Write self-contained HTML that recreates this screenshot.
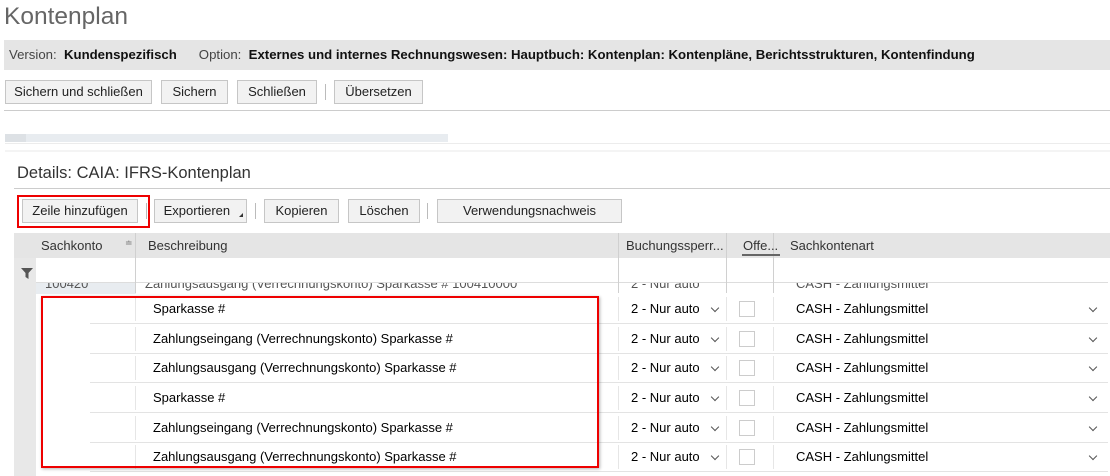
<!DOCTYPE html>
<html><head><meta charset="utf-8"><style>
*{margin:0;padding:0;box-sizing:border-box}
body{width:1110px;height:476px;background:#fff;font-family:"Liberation Sans",Arial,sans-serif;position:relative;overflow:hidden;color:#000}
.a{position:absolute}
.btn{position:absolute;height:24px;background:#f2f2f2;border:1px solid #c6c6c6;font-size:13px;line-height:22px;text-align:center;color:#222}
.sep{position:absolute;width:1px;height:16px;background:#bbb}
.row{position:absolute;left:36px;width:1072px;height:30px;border-bottom:1px solid #e3e3e3}
.t{position:absolute;font-size:13px;color:#000;white-space:nowrap;top:7px}
.chev{position:absolute;top:11px;width:6px;height:6px;border-right:1.5px solid #555;border-bottom:1.5px solid #555;transform:rotate(45deg)}
.cb{position:absolute;top:7px;left:703px;width:16px;height:16px;border:1px solid #ccc;background:#fff}
.vd{position:absolute;top:3px;width:1px;height:24px;background:#e6e6e6}
</style></head><body>
<div class="a" style="left:4px;top:3px;font-size:24.5px;color:#666">Kontenplan</div>
<div class="a" style="left:4px;top:40px;width:1106px;height:30px;background:#e5e5e5;font-size:13.2px;line-height:30px;padding-left:5px;color:#444">Version:&nbsp; <b style="color:#111">Kundenspezifisch</b>&nbsp;&nbsp;&nbsp;&nbsp;&nbsp; Option:&nbsp; <b style="color:#111">Externes und internes Rechnungswesen: Hauptbuch: Kontenplan: Kontenpläne, Berichtsstrukturen, Kontenfindung</b></div>
<div class="btn" style="left:5px;top:80px;width:147px">Sichern und schließen</div>
<div class="btn" style="left:161px;top:80px;width:67px">Sichern</div>
<div class="btn" style="left:237px;top:80px;width:80px">Schließen</div>
<div class="sep" style="left:325px;top:84px"></div>
<div class="btn" style="left:334px;top:80px;width:89px">Übersetzen</div>
<div class="a" style="left:4px;top:110px;width:1106px;height:1px;background:#ccc"></div>
<div class="a" style="left:5px;top:134px;width:443px;height:8px;background:#e8ecf0"></div>
<div class="a" style="left:5px;top:134px;width:21px;height:8px;background:#dde1e5"></div>
<div class="a" style="left:5px;top:143px;width:1105px;height:1px;background:#ececec"></div>
<div class="a" style="left:5px;top:150px;width:1105px;height:2px;background:#f4f4f4"></div>
<div class="a" style="left:17px;top:164px;font-size:16.5px;color:#333">Details: CAIA: IFRS-Kontenplan</div>
<div class="a" style="left:14px;top:188px;width:1096px;height:1px;background:#ccc"></div>
<div class="btn" style="left:22px;top:199px;width:116px">Zeile hinzufügen</div>
<div class="a" style="left:17px;top:195px;width:133px;height:33px;border:2px solid #e00"></div>
<div class="sep" style="left:146px;top:203px"></div>
<div class="btn" style="left:154px;top:199px;width:93px">Exportieren&nbsp;&nbsp;</div>
<div class="a" style="left:239px;top:213px;width:0;height:0;border-left:4px solid transparent;border-bottom:4px solid #333"></div>
<div class="sep" style="left:255px;top:203px"></div>
<div class="btn" style="left:264px;top:199px;width:75px">Kopieren</div>
<div class="btn" style="left:348px;top:199px;width:72px">Löschen</div>
<div class="sep" style="left:427px;top:203px"></div>
<div class="btn" style="left:437px;top:199px;width:185px">Verwendungsnachweis</div>
<!-- table -->
<div class="a" style="left:14px;top:233px;width:22px;height:243px;background:#e8e8e8"></div>
<!-- partial row -->
<div class="a" style="left:36px;top:282px;width:100px;height:12px;background:#e8ecf0"></div>
<div class="a" style="left:45px;top:276px;font-size:13px;color:#555">100420</div>
<div class="a" style="left:145px;top:276px;font-size:13px;color:#555">Zahlungsausgang (Verrechnungskonto) Sparkasse # 100410000</div>
<div class="a" style="left:631px;top:276px;font-size:13px;color:#555;width:68px;overflow:hidden;white-space:nowrap">2 - Nur autom.</div>
<div class="a" style="left:796px;top:276px;font-size:13px;color:#555">CASH - Zahlungsmittel</div>
<div class="a" style="left:14px;top:233px;width:1096px;height:25px;background:#e5e5e5"></div>
<div class="a" style="left:36px;top:258px;width:1072px;height:25px;background:#fff;border-bottom:1px solid #ddd"></div>
<div class="a" style="left:135px;top:233px;width:1px;height:60px;background:#d0d0d0"></div>
<div class="a" style="left:618px;top:233px;width:1px;height:60px;background:#d0d0d0"></div>
<div class="a" style="left:726px;top:233px;width:1px;height:60px;background:#d0d0d0"></div>
<div class="a" style="left:773px;top:233px;width:1px;height:60px;background:#d0d0d0"></div>
<div class="a" style="left:41px;top:238px;font-size:13px;color:#333">Sachkonto</div>
<div class="a" style="left:125px;top:238px;font-size:9px;color:#888">≐</div>
<div class="a" style="left:148px;top:238px;font-size:13px;color:#333">Beschreibung</div>
<div class="a" style="left:626px;top:238px;font-size:13px;color:#333">Buchungssperr...</div>
<div class="a" style="left:743px;top:238px;font-size:13px;color:#333">Offe...</div>
<div class="a" style="left:742px;top:254px;width:38px;height:2px;background:#666"></div>
<div class="a" style="left:790px;top:238px;font-size:13px;color:#333">Sachkontenart</div>
<svg class="a" style="left:20px;top:266px" width="14" height="14" viewBox="0 0 14 14"><path d="M1 2h12L8.5 7v6L5.5 11V7z" fill="#555"/></svg>
<div class="row" style="top:294px"><div class="vd" style="left:99px"></div><div class="t" style="left:117px">Sparkasse #</div><div class="vd" style="left:582px"></div><div class="t" style="left:595px;width:68px;overflow:hidden">2 - Nur autom</div><div class="chev" style="left:676px"></div><div class="vd" style="left:690px"></div><div class="cb"></div><div class="vd" style="left:737px"></div><div class="t" style="left:760px">CASH - Zahlungsmittel</div><div class="chev" style="left:1054px"></div></div>
<div class="row" style="top:324px"><div class="vd" style="left:99px"></div><div class="t" style="left:117px">Zahlungseingang (Verrechnungskonto) Sparkasse #</div><div class="vd" style="left:582px"></div><div class="t" style="left:595px;width:68px;overflow:hidden">2 - Nur autom</div><div class="chev" style="left:676px"></div><div class="vd" style="left:690px"></div><div class="cb"></div><div class="vd" style="left:737px"></div><div class="t" style="left:760px">CASH - Zahlungsmittel</div><div class="chev" style="left:1054px"></div></div>
<div class="row" style="top:353px"><div class="vd" style="left:99px"></div><div class="t" style="left:117px">Zahlungsausgang (Verrechnungskonto) Sparkasse #</div><div class="vd" style="left:582px"></div><div class="t" style="left:595px;width:68px;overflow:hidden">2 - Nur autom</div><div class="chev" style="left:676px"></div><div class="vd" style="left:690px"></div><div class="cb"></div><div class="vd" style="left:737px"></div><div class="t" style="left:760px">CASH - Zahlungsmittel</div><div class="chev" style="left:1054px"></div></div>
<div class="row" style="top:383px"><div class="vd" style="left:99px"></div><div class="t" style="left:117px">Sparkasse #</div><div class="vd" style="left:582px"></div><div class="t" style="left:595px;width:68px;overflow:hidden">2 - Nur autom</div><div class="chev" style="left:676px"></div><div class="vd" style="left:690px"></div><div class="cb"></div><div class="vd" style="left:737px"></div><div class="t" style="left:760px">CASH - Zahlungsmittel</div><div class="chev" style="left:1054px"></div></div>
<div class="row" style="top:413px"><div class="vd" style="left:99px"></div><div class="t" style="left:117px">Zahlungseingang (Verrechnungskonto) Sparkasse #</div><div class="vd" style="left:582px"></div><div class="t" style="left:595px;width:68px;overflow:hidden">2 - Nur autom</div><div class="chev" style="left:676px"></div><div class="vd" style="left:690px"></div><div class="cb"></div><div class="vd" style="left:737px"></div><div class="t" style="left:760px">CASH - Zahlungsmittel</div><div class="chev" style="left:1054px"></div></div>
<div class="row" style="top:442px"><div class="vd" style="left:99px"></div><div class="t" style="left:117px">Zahlungsausgang (Verrechnungskonto) Sparkasse #</div><div class="vd" style="left:582px"></div><div class="t" style="left:595px;width:68px;overflow:hidden">2 - Nur autom</div><div class="chev" style="left:676px"></div><div class="vd" style="left:690px"></div><div class="cb"></div><div class="vd" style="left:737px"></div><div class="t" style="left:760px">CASH - Zahlungsmittel</div><div class="chev" style="left:1054px"></div></div>
<div class="a" style="left:36px;top:294px;width:54px;height:182px;background:#fff"></div>
<div class="a" style="left:41px;top:296px;width:558px;height:172px;border:2px solid #e00;box-shadow:1px 1px 3px rgba(0,0,0,.3)"></div>
</body></html>
